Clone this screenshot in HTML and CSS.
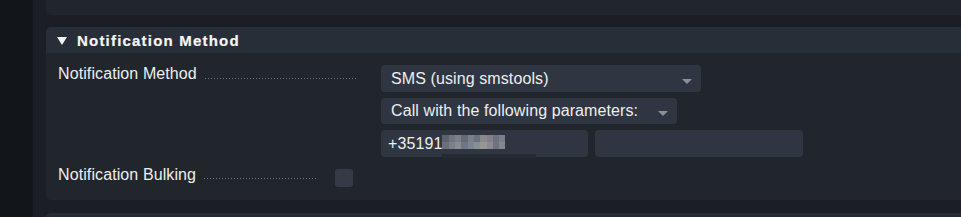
FILE: index.html
```html
<!DOCTYPE html>
<html lang="en">
<head>
<meta charset="utf-8">
<title>Notification Method</title>
<link rel="stylesheet" href="styles.css">
</head>
<body>
<div class="page">
  <aside class="rail"></aside>
  <main class="main">
    <section class="card card-top"></section>
    <section class="card panel">
      <header class="panel-head">
        <span class="caret"></span>
        <span class="panel-title">Notification Method</span>
      </header>
      <div class="panel-body">
        <div class="row row-method">
          <div class="label-cell label-cell-wide">
            <span class="label">Notification Method</span>
            <span class="dots"></span>
          </div>
          <div class="controls">
            <div class="select select-wide"><span class="select-text">SMS (using smstools)</span><span class="arrow"></span></div>
            <div class="select select-mid"><span class="select-text">Call with the following parameters:</span><span class="arrow"></span></div>
            <div class="inputs">
              <div class="input">
                <span class="input-text">+35191</span>
                <span class="mosaic">
                  <i style="background:#5b626d"></i><i style="background:#6f7580"></i><i style="background:#7c8089"></i><i style="background:#646b77"></i><i style="background:#7a7f89"></i><i style="background:#6c737f"></i><i style="background:#898990"></i><i style="background:#847f87"></i><i style="background:#6b717e"></i><i style="background:#7b7e87"></i>
                  <i style="background:#6a707a"></i><i style="background:#7b7f88"></i><i style="background:#8a8b91"></i><i style="background:#6e7787"></i><i style="background:#79878f"></i><i style="background:#898d95"></i><i style="background:#999595"></i><i style="background:#8d8991"></i><i style="background:#6d737f"></i><i style="background:#85878f"></i>
                </span>
                <span class="smear"></span>
              </div>
              <div class="input"></div>
            </div>
          </div>
        </div>
        <div class="row row-bulk">
          <div class="label-cell label-cell-short">
            <span class="label">Notification Bulking</span>
            <span class="dots dots-low"></span>
          </div>
          <span class="checkbox"></span>
        </div>
      </div>
    </section>
    <section class="card card-bottom"></section>
  </main>
</div>
</body>
</html>
```
FILE: styles.css
```css
* { box-sizing: border-box; }
html, body { margin: 0; padding: 0; }
body {
  background: #1b1f25;
  font-family: "Liberation Sans", Arial, sans-serif;
  color: #ececec;
  width: 961px;
  height: 217px;
  overflow: hidden;
}
.page {
  display: flex;
  height: 217px;
}
.rail {
  width: 33px;
  flex: none;
  background: #12161b;
}
.main {
  flex: 1;
  padding-left: 13px;
  display: flex;
  flex-direction: column;
  overflow: hidden;
}
.card {
  margin-right: -20px;
  flex: none;
}
.card-top {
  height: 15px;
  background: #21262e;
  border-radius: 0 0 5px 5px;
}
.panel {
  margin-top: 12px;
  background: #21262d;
  border-radius: 5px;
  overflow: hidden;
}
.panel-head {
  height: 26px;
  background: #272e38;
  display: flex;
  align-items: center;
  padding-left: 11px;
}
.caret {
  width: 0;
  height: 0;
  border-left: 5px solid transparent;
  border-right: 5px solid transparent;
  border-top: 8px solid #f2f2f2;
  margin-top: 1px;
}
.panel-title {
  margin-left: 10px;
  font-size: 15px;
  font-weight: bold;
  letter-spacing: 1.2px;
  color: #f6f6f6;
  -webkit-text-stroke: 0.2px #f6f6f6;
}
.panel-body {
  padding: 12px 0 13px 12px;
}
.row {
  display: flex;
  align-items: flex-start;
}
.row-bulk {
  margin-top: 9px;
}
.label-cell {
  display: flex;
  align-items: flex-start;
}
.label-cell-wide {
  width: 298px;
  margin-right: 25px;
}
.label-cell-short {
  width: 260px;
  margin-right: 17px;
}
.label {
  font-size: 16px;
  line-height: 18px;
  letter-spacing: 0.1px;
  color: #eeeeee;
  white-space: nowrap;
}
.dots {
  flex: 1;
  height: 1px;
  margin-left: 8px;
  margin-top: 13px;
  background: repeating-linear-gradient(to right, #6b7079 0 1px, transparent 1px 3px);
}
.dots-low { margin-top: 12px; }
.controls {
  display: flex;
  flex-direction: column;
  gap: 6px;
}
.select {
  display: flex;
  align-items: center;
  justify-content: space-between;
  background: #2f3642;
  border-radius: 4px;
  padding: 0 9px 0 10px;
  font-size: 16px;
  letter-spacing: 0.1px;
  color: #eeeeee;
}
.select-wide { width: 320px; height: 27px; }
.select-mid { width: 296px; height: 26px; }
.select-text { white-space: nowrap; }
.arrow {
  width: 0;
  height: 0;
  border-left: 5px solid transparent;
  border-right: 5px solid transparent;
  border-top: 5px solid #8b9099;
  margin-top: 5px;
}
.inputs {
  display: flex;
  gap: 7px;
}
.input {
  position: relative;
  width: 207px;
  height: 27px;
  background: #2f3642;
  border-radius: 4px;
  display: flex;
  align-items: center;
  padding-left: 7px;
  font-size: 16px;
}
.input + .input { width: 208px; }
.input-text { color: #eeeeee; letter-spacing: 0.1px; }
.mosaic {
  display: grid;
  grid-template-columns: repeat(10, 6.3px);
  grid-template-rows: 7px 7px;
  margin-top: -3px;
}
.mosaic i { display: block; }
.smear {
  position: absolute;
  left: 61px;
  top: 24px;
  width: 94px;
  height: 4px;
  background: #262b33;
}
.checkbox {
  width: 18px;
  height: 18px;
  margin-top: 3px;
  background: #343b46;
  border-radius: 3px;
}
.card-bottom {
  margin-top: 13px;
  height: 20px;
  background: #262c35;
  border-radius: 5px 5px 0 0;
}
```
